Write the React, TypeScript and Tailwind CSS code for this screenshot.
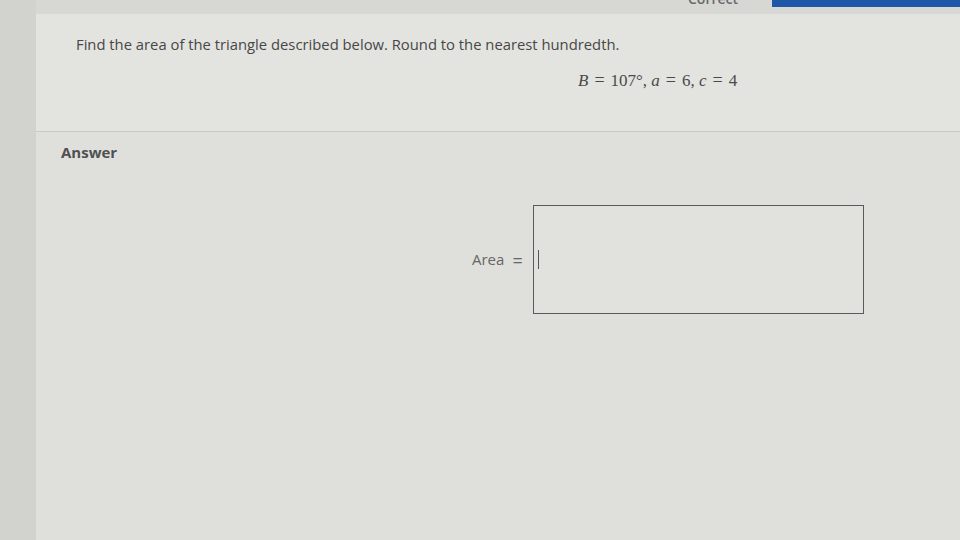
export default function App() {
  return (
    <div className="flex h-[540px] w-[960px] overflow-hidden bg-[#d7d8d4] font-['Open_Sans',sans-serif] text-[#4a4a4a]">
      <div className="w-[36px] shrink-0 bg-[#d2d3cf]" />
      <div className="flex flex-1 flex-col">
        {/* top strip */}
        <div className="flex h-[14px] items-start">
          <div className="flex-1" />
          <div className="-mt-[8px] w-[84px] text-[14px] font-semibold leading-none text-[#6a6a6a]">Correct</div>
          <div className="h-[7px] w-[188px] bg-[#1e56a8]" />
        </div>
        {/* question */}
        <div className="flex h-[118px] flex-col border-b border-[#c9cac6] bg-[#e3e4e0] pl-[40px]">
          <p className="mt-[20px] text-[14.8px] leading-[20px] text-[#474747]">
            Find the area of the triangle described below. Round to the nearest hundredth.
          </p>
          <p className="mt-[16px] ml-[502px] font-['Liberation_Serif',serif] text-[17px] leading-[20px] text-[#4a4a4a]">
            <i>B</i>
            <span className="mx-[6px] text-[18px]">=</span>107°, <i>a</i>
            <span className="mx-[6px] text-[18px]">=</span>6, <i>c</i>
            <span className="mx-[6px] text-[18px]">=</span>4
          </p>
        </div>
        {/* answer */}
        <div className="flex flex-1 flex-col bg-[#dfe0dc] pl-[25px]">
          <h3 className="mt-[10px] text-[15px] font-bold leading-[20px] text-[#505050]">Answer</h3>
          <div className="mt-[43px] flex items-center">
            <span className="ml-[411px] text-[15px] text-[#666]">Area</span>
            <span className="ml-[8px] mr-[10px] text-[18px] leading-none text-[#666]">=</span>
            <div className="relative h-[109px] w-[331px] border border-[#5a5a5a] bg-[#e1e2de]">
              <div className="absolute top-[44px] left-[4px] h-[19px] w-px bg-[#555]" />
            </div>
          </div>
        </div>
      </div>
    </div>
  );
}
